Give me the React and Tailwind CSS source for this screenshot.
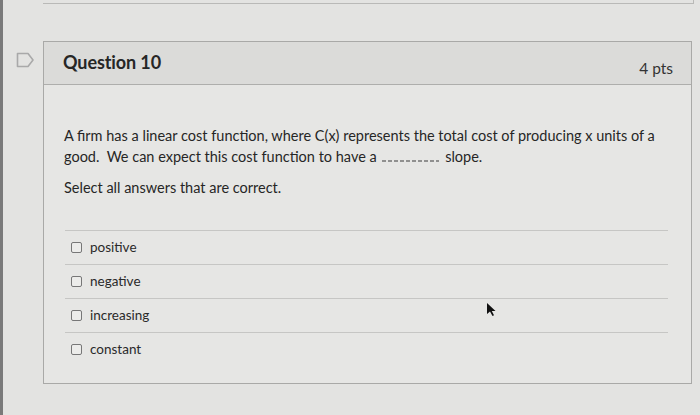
import React from "react";

const answers = ["positive", "negative", "increasing", "constant"];

function Flag() {
  return (
    <svg width="19" height="16" viewBox="0 0 19 16" className="shrink-0">
      <path d="M1.5 1.5 H12 L17 8 L12 14.5 H1.5 Z" fill="none" stroke="#a9a9a9" strokeWidth="1.6" strokeLinejoin="round" />
    </svg>
  );
}

function Cursor() {
  return (
    <svg width="12" height="16" viewBox="0 0 12 16" className="absolute left-[483px] top-[302px]">
      <path d="M1 1 L1 12 L4 9.5 L6.5 14 L8 13.2 L5.8 9 L9.5 9 Z" fill="#111" />
    </svg>
  );
}

function Blank() {
  return (
    <svg width="57" height="4" viewBox="0 0 57 4" className="inline-block align-baseline mx-[2px]">
      <line x1="0" y1="3" x2="57" y2="3" stroke="#3a3a3a" strokeWidth="1" strokeDasharray="4 2" />
    </svg>
  );
}

export default function App() {
  return (
    <div
      className="relative w-[700px] h-[415px] overflow-hidden bg-[#e3e3e1] border-l-[3px] border-[#7a7a7a]"
      style={{ fontFamily: "Lato, 'Open Sans', sans-serif" }}
    >
      <div className="ml-[40px] w-[651px] h-[4px] border-b border-r border-[#b9b9b7]" />
      <div className="flex mt-[37px]">
        <div className="w-[40px] pl-[13px] pt-[11px]">
          <Flag />
        </div>
        <div className="w-[649px] h-[343px] border border-[#a9a9a7] bg-[#e6e6e4] flex flex-col">
          <div className="h-[43px] flex items-center justify-between pl-[19px] pr-[18px] bg-[#dbdbd9] border-b border-[#aeaeac]">
            <div className="text-[18px] font-bold text-[#262626] tracking-[-0.1px] mt-[-2px]">Question 10</div>
            <div className="text-[15.5px] text-[#333] mt-[12px]">4 pts</div>
          </div>
          <div className="pl-[20px] pr-[22px] pt-[40px] text-[14.5px] text-[#262626] leading-[21px]">
            <p>
              A firm has a linear cost function, where C(x) represents the total cost of producing x units of a good.&nbsp; We can expect this cost function to have a <Blank /> slope.
            </p>
            <p className="mt-[10px]">Select all answers that are correct.</p>
          </div>
          <div className="mt-[32px] ml-[21px] mr-[23px]">
            {answers.map((a) => (
              <div key={a} className="h-[34px] border-t border-[#c6c6c4] flex items-center pl-[6px]">
                <span className="w-[11px] h-[11px] border-[1.5px] border-[#777] rounded-[2px] bg-[#ececea] mr-[8px]" />
                <span className="text-[13.5px] text-[#2a2a2a]">{a}</span>
              </div>
            ))}
          </div>
        </div>
      </div>
      <Cursor />
    </div>
  );
}
